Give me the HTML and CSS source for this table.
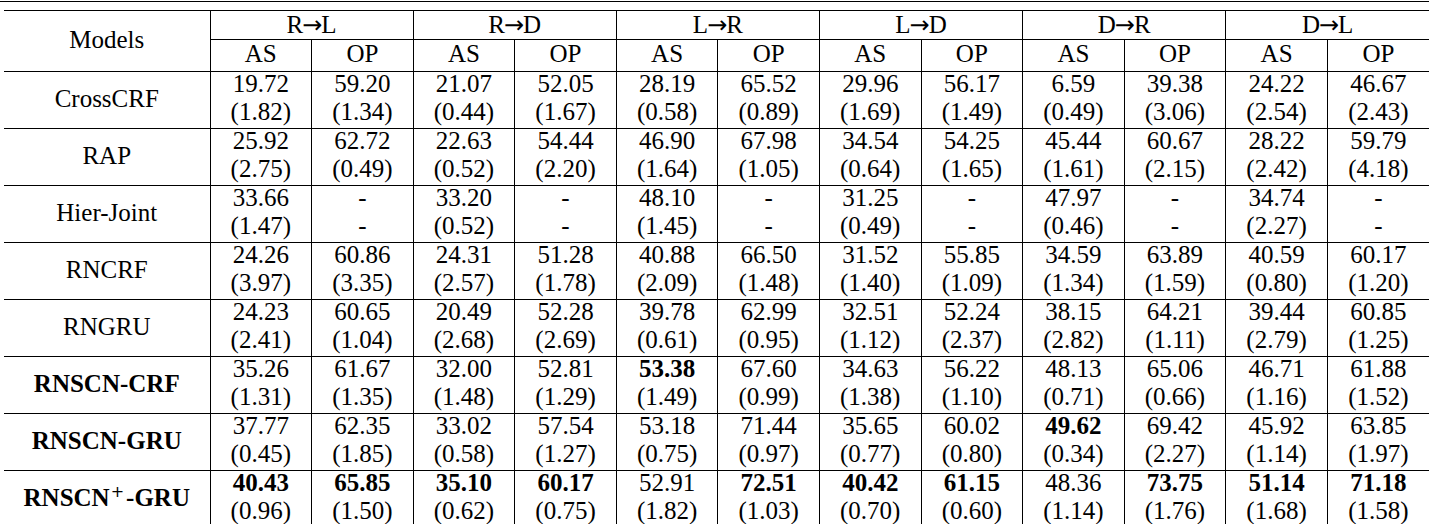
FILE: index.html
```html
<!DOCTYPE html>
<html>
<head>
<meta charset="utf-8">
<title>Results table</title>
<link rel="stylesheet" href="styles.css">
</head>
<body>
<div class="toprule"></div>
<table class="results">
  <colgroup>
    <col class="c-model">
    <col><col><col><col><col><col><col><col><col><col><col><col>
  </colgroup>
  <thead>
    <tr class="grp">
      <th class="models" rowspan="2">Models</th>
      <th colspan="2">R<span class="arr">→</span>L</th>
      <th colspan="2">R<span class="arr">→</span>D</th>
      <th colspan="2">L<span class="arr">→</span>R</th>
      <th colspan="2">L<span class="arr">→</span>D</th>
      <th colspan="2">D<span class="arr">→</span>R</th>
      <th colspan="2">D<span class="arr">→</span>L</th>
    </tr>
    <tr class="sub">
      <th>AS</th><th>OP</th><th>AS</th><th>OP</th><th>AS</th><th>OP</th>
      <th>AS</th><th>OP</th><th>AS</th><th>OP</th><th>AS</th><th>OP</th>
    </tr>
  </thead>
  <tbody>
    <tr>
      <td class="name">CrossCRF</td>
      <td><span class="v">19.72</span><span class="s">(1.82)</span></td>
      <td><span class="v">59.20</span><span class="s">(1.34)</span></td>
      <td><span class="v">21.07</span><span class="s">(0.44)</span></td>
      <td><span class="v">52.05</span><span class="s">(1.67)</span></td>
      <td><span class="v">28.19</span><span class="s">(0.58)</span></td>
      <td><span class="v">65.52</span><span class="s">(0.89)</span></td>
      <td><span class="v">29.96</span><span class="s">(1.69)</span></td>
      <td><span class="v">56.17</span><span class="s">(1.49)</span></td>
      <td><span class="v">6.59</span><span class="s">(0.49)</span></td>
      <td><span class="v">39.38</span><span class="s">(3.06)</span></td>
      <td><span class="v">24.22</span><span class="s">(2.54)</span></td>
      <td><span class="v">46.67</span><span class="s">(2.43)</span></td>
    </tr>
    <tr>
      <td class="name">RAP</td>
      <td><span class="v">25.92</span><span class="s">(2.75)</span></td>
      <td><span class="v">62.72</span><span class="s">(0.49)</span></td>
      <td><span class="v">22.63</span><span class="s">(0.52)</span></td>
      <td><span class="v">54.44</span><span class="s">(2.20)</span></td>
      <td><span class="v">46.90</span><span class="s">(1.64)</span></td>
      <td><span class="v">67.98</span><span class="s">(1.05)</span></td>
      <td><span class="v">34.54</span><span class="s">(0.64)</span></td>
      <td><span class="v">54.25</span><span class="s">(1.65)</span></td>
      <td><span class="v">45.44</span><span class="s">(1.61)</span></td>
      <td><span class="v">60.67</span><span class="s">(2.15)</span></td>
      <td><span class="v">28.22</span><span class="s">(2.42)</span></td>
      <td><span class="v">59.79</span><span class="s">(4.18)</span></td>
    </tr>
    <tr>
      <td class="name">Hier-Joint</td>
      <td><span class="v">33.66</span><span class="s">(1.47)</span></td>
      <td><span class="v">-</span><span class="s">-</span></td>
      <td><span class="v">33.20</span><span class="s">(0.52)</span></td>
      <td><span class="v">-</span><span class="s">-</span></td>
      <td><span class="v">48.10</span><span class="s">(1.45)</span></td>
      <td><span class="v">-</span><span class="s">-</span></td>
      <td><span class="v">31.25</span><span class="s">(0.49)</span></td>
      <td><span class="v">-</span><span class="s">-</span></td>
      <td><span class="v">47.97</span><span class="s">(0.46)</span></td>
      <td><span class="v">-</span><span class="s">-</span></td>
      <td><span class="v">34.74</span><span class="s">(2.27)</span></td>
      <td><span class="v">-</span><span class="s">-</span></td>
    </tr>
    <tr>
      <td class="name">RNCRF</td>
      <td><span class="v">24.26</span><span class="s">(3.97)</span></td>
      <td><span class="v">60.86</span><span class="s">(3.35)</span></td>
      <td><span class="v">24.31</span><span class="s">(2.57)</span></td>
      <td><span class="v">51.28</span><span class="s">(1.78)</span></td>
      <td><span class="v">40.88</span><span class="s">(2.09)</span></td>
      <td><span class="v">66.50</span><span class="s">(1.48)</span></td>
      <td><span class="v">31.52</span><span class="s">(1.40)</span></td>
      <td><span class="v">55.85</span><span class="s">(1.09)</span></td>
      <td><span class="v">34.59</span><span class="s">(1.34)</span></td>
      <td><span class="v">63.89</span><span class="s">(1.59)</span></td>
      <td><span class="v">40.59</span><span class="s">(0.80)</span></td>
      <td><span class="v">60.17</span><span class="s">(1.20)</span></td>
    </tr>
    <tr>
      <td class="name">RNGRU</td>
      <td><span class="v">24.23</span><span class="s">(2.41)</span></td>
      <td><span class="v">60.65</span><span class="s">(1.04)</span></td>
      <td><span class="v">20.49</span><span class="s">(2.68)</span></td>
      <td><span class="v">52.28</span><span class="s">(2.69)</span></td>
      <td><span class="v">39.78</span><span class="s">(0.61)</span></td>
      <td><span class="v">62.99</span><span class="s">(0.95)</span></td>
      <td><span class="v">32.51</span><span class="s">(1.12)</span></td>
      <td><span class="v">52.24</span><span class="s">(2.37)</span></td>
      <td><span class="v">38.15</span><span class="s">(2.82)</span></td>
      <td><span class="v">64.21</span><span class="s">(1.11)</span></td>
      <td><span class="v">39.44</span><span class="s">(2.79)</span></td>
      <td><span class="v">60.85</span><span class="s">(1.25)</span></td>
    </tr>
    <tr>
      <td class="name ours">RNSCN-CRF</td>
      <td><span class="v">35.26</span><span class="s">(1.31)</span></td>
      <td><span class="v">61.67</span><span class="s">(1.35)</span></td>
      <td><span class="v">32.00</span><span class="s">(1.48)</span></td>
      <td><span class="v">52.81</span><span class="s">(1.29)</span></td>
      <td><span class="v best">53.38</span><span class="s">(1.49)</span></td>
      <td><span class="v">67.60</span><span class="s">(0.99)</span></td>
      <td><span class="v">34.63</span><span class="s">(1.38)</span></td>
      <td><span class="v">56.22</span><span class="s">(1.10)</span></td>
      <td><span class="v">48.13</span><span class="s">(0.71)</span></td>
      <td><span class="v">65.06</span><span class="s">(0.66)</span></td>
      <td><span class="v">46.71</span><span class="s">(1.16)</span></td>
      <td><span class="v">61.88</span><span class="s">(1.52)</span></td>
    </tr>
    <tr>
      <td class="name ours">RNSCN-GRU</td>
      <td><span class="v">37.77</span><span class="s">(0.45)</span></td>
      <td><span class="v">62.35</span><span class="s">(1.85)</span></td>
      <td><span class="v">33.02</span><span class="s">(0.58)</span></td>
      <td><span class="v">57.54</span><span class="s">(1.27)</span></td>
      <td><span class="v">53.18</span><span class="s">(0.75)</span></td>
      <td><span class="v">71.44</span><span class="s">(0.97)</span></td>
      <td><span class="v">35.65</span><span class="s">(0.77)</span></td>
      <td><span class="v">60.02</span><span class="s">(0.80)</span></td>
      <td><span class="v best">49.62</span><span class="s">(0.34)</span></td>
      <td><span class="v">69.42</span><span class="s">(2.27)</span></td>
      <td><span class="v">45.92</span><span class="s">(1.14)</span></td>
      <td><span class="v">63.85</span><span class="s">(1.97)</span></td>
    </tr>
    <tr>
      <td class="name ours">RNSCN<sup class="plus">+</sup>-GRU</td>
      <td><span class="v best">40.43</span><span class="s">(0.96)</span></td>
      <td><span class="v best">65.85</span><span class="s">(1.50)</span></td>
      <td><span class="v best">35.10</span><span class="s">(0.62)</span></td>
      <td><span class="v best">60.17</span><span class="s">(0.75)</span></td>
      <td><span class="v">52.91</span><span class="s">(1.82)</span></td>
      <td><span class="v best">72.51</span><span class="s">(1.03)</span></td>
      <td><span class="v best">40.42</span><span class="s">(0.70)</span></td>
      <td><span class="v best">61.15</span><span class="s">(0.60)</span></td>
      <td><span class="v">48.36</span><span class="s">(1.14)</span></td>
      <td><span class="v best">73.75</span><span class="s">(1.76)</span></td>
      <td><span class="v best">51.14</span><span class="s">(1.68)</span></td>
      <td><span class="v best">71.18</span><span class="s">(1.58)</span></td>
    </tr>
  </tbody>
</table>
</body>
</html>
```
FILE: styles.css
```css
html, body {
  margin: 0;
  padding: 0;
  background: #fff;
}
body {
  font-family: "Liberation Serif", "Times New Roman", serif;
  color: #000;
  width: 1429px;
  overflow: hidden;
}
.toprule {
  margin-top: 1px;
  height: 0;
  border-top: 1px solid #000;
  margin-bottom: 8px;
}
.results {
  margin-left: 4px;
  width: 1425px;
  border-collapse: collapse;
  table-layout: fixed;
  font-family: "Liberation Serif", "Times New Roman", serif;
  font-size: 25px;
  line-height: 28px;
  border-top: 1px solid #000;
  border-bottom: 1px solid #000;
}
.c-model {
  width: 206px;
}
.results th,
.results td {
  padding: 0;
  text-align: center;
  font-weight: normal;
  vertical-align: middle;
  white-space: nowrap;
}
.results th + th,
.results td + td {
  border-left: 1px solid #000;
}
.results .models {
  border-right: 1px solid #000;
  padding-bottom: 2px;
}
.results .grp {
  height: 29px;
}
.results .sub {
  height: 27px;
}
.results .sub th {
  border-top: 1px solid #000;
  padding-bottom: 3px;
}
.results tbody tr {
  height: 57px;
  border-top: 1px solid #000;
}
.results tbody td {
  vertical-align: top;
}
.results tbody td.name {
  vertical-align: middle;
  padding-bottom: 2px;
}
.results .ours {
  font-weight: bold;
}
.v {
  display: block;
  line-height: 24px;
}
.s {
  display: block;
  line-height: 32px;
}
.best {
  font-weight: bold;
}
.arr {
  font-family: "DejaVu Sans", sans-serif;
  font-size: 24px;
  margin: 0 -1px;
}
.plus {
  font-family: "DejaVu Sans", sans-serif;
  font-weight: normal;
  font-size: 16px;
  line-height: 0;
  vertical-align: 9px;
  margin: 0 2px 0 1px;
}
```
